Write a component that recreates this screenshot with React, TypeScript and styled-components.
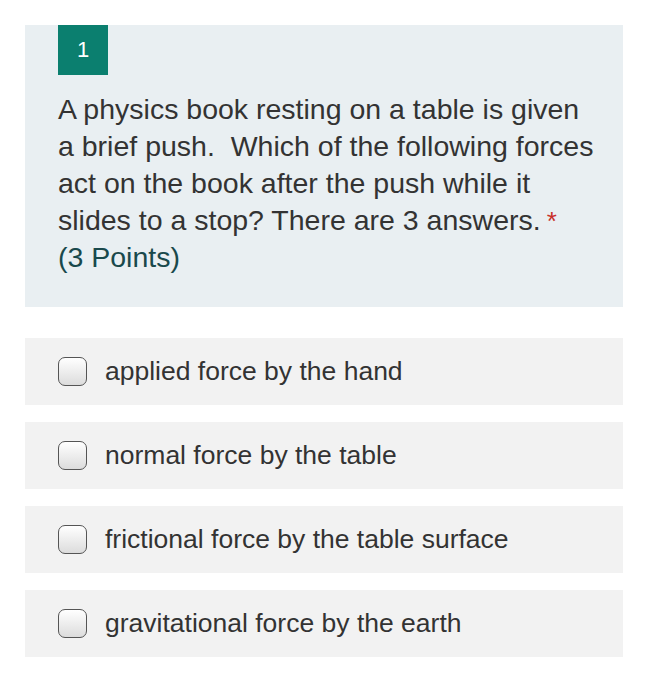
import React from "react";
import styled, { createGlobalStyle } from "styled-components";

const GlobalStyle = createGlobalStyle`
  body {
    margin: 0;
    background: #ffffff;
    font-family: "Liberation Sans", Arial, sans-serif;
  }
`;

const Page = styled.div`
  width: 649px;
  padding: 25px 26px 40px 25px;
  box-sizing: border-box;
`;

const QuestionCard = styled.div`
  background: #e9eff2;
  padding: 0 20px 31px 33px;
`;

const Badge = styled.div`
  width: 50px;
  height: 50px;
  background: #0b7f6f;
  color: #ffffff;
  font-size: 22px;
  display: flex;
  align-items: center;
  justify-content: center;
`;

const QuestionText = styled.div`
  margin-top: 16px;
  font-size: 28.5px;
  line-height: 37px;
  color: #333333;
  white-space: nowrap;
`;

const Required = styled.span`
  color: #c8312b;
  margin-left: 6px;
  font-size: 26px;
  line-height: 1;
`;

const Points = styled.div`
  color: #19494c;
`;

const Options = styled.div`
  margin-top: 31px;
  display: flex;
  flex-direction: column;
  gap: 17px;
`;

const Option = styled.label`
  height: 67px;
  background: #f2f2f2;
  display: flex;
  align-items: center;
  padding-left: 33px;
  gap: 18px;
  cursor: pointer;
`;

const Box = styled.span`
  width: 27px;
  height: 27px;
  border: 1.6px solid #555555;
  border-radius: 7px;
  background: linear-gradient(#ffffff, #dcdcdc);
  flex-shrink: 0;
`;

const OptionText = styled.span`
  font-size: 26.5px;
  color: #333333;
`;

const answers = [
  "applied force by the hand",
  "normal force by the table",
  "frictional force by the table surface",
  "gravitational force by the earth",
];

export default function App() {
  return (
    <>
      <GlobalStyle />
      <Page>
        <QuestionCard>
          <Badge>1</Badge>
          <QuestionText>
            A physics book resting on a table is given
            <br />
            a brief push.&nbsp; Which of the following forces
            <br />
            act on the book after the push while it
            <br />
            slides to a stop? There are 3 answers.
            <Required>*</Required>
            <Points>(3 Points)</Points>
          </QuestionText>
        </QuestionCard>
        <Options>
          {answers.map((a) => (
            <Option key={a}>
              <Box />
              <OptionText>{a}</OptionText>
            </Option>
          ))}
        </Options>
      </Page>
    </>
  );
}
